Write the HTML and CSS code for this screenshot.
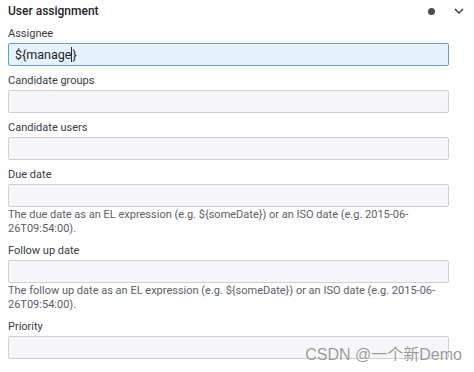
FILE: index.html
```html
<!DOCTYPE html>
<html lang="en">

<head>
    <meta charset="UTF-8">
    <meta name="viewport" content="width=device-width, initial-scale=1.0">
    <title>User assignment</title>
    <link rel="stylesheet" href="styles.css">
</head>

<body>
    <div class="group">
        <div class="group-header">
            <span class="group-title">User assignment</span>
            <span class="group-dot"></span>
            <svg class="group-toggle" width="10" height="6" viewBox="0 0 10 6">
                <path d="M1 1 L5 5 L9 1" fill="none" stroke="#333" stroke-width="1.4" />
            </svg>
        </div>

        <div class="entry">
            <label class="entry-label">Assignee</label>
            <div class="entry-input active">${manage<span class="caret"></span>}</div>
        </div>

        <div class="entry">
            <label class="entry-label">Candidate groups</label>
            <div class="entry-input"></div>
        </div>

        <div class="entry">
            <label class="entry-label">Candidate users</label>
            <div class="entry-input"></div>
        </div>

        <div class="entry">
            <label class="entry-label">Due date</label>
            <div class="entry-input"></div>
            <div class="entry-help">The due date as an EL expression (e.g. ${someDate}) or an ISO date (e.g. 2015-06-26T09:54:00).</div>
        </div>

        <div class="entry">
            <label class="entry-label">Follow up date</label>
            <div class="entry-input"></div>
            <div class="entry-help">The follow up date as an EL expression (e.g. ${someDate}) or an ISO date (e.g. 2015-06-26T09:54:00).</div>
        </div>

        <div class="entry">
            <label class="entry-label">Priority</label>
            <div class="entry-input"></div>
        </div>
    </div>

    <div class="watermark">CSDN @一个新Demo</div>
</body>

</html>
```

FILE: styles.css
```css
body {
    font-family: Roboto, "Noto Sans", Arial, sans-serif;
    background-color: #fff;
    color: #333;
    margin: 0;
    padding: 0;
}

.group {
    padding: 0 25px 0 8px;
}

.group-header {
    display: flex;
    align-items: center;
    height: 22px;
    margin-right: -17px;
    margin-bottom: 3px;
}

.group-title {
    flex: 1;
    font-size: 12px;
    font-weight: 500;
    color: #22242a;
}

.group-dot {
    width: 7px;
    height: 7px;
    border-radius: 50%;
    background-color: #4a4c52;
    margin-right: 19px;
}

.group-toggle {
    margin-right: 2px;
}

.entry {
    margin-bottom: 6px;
}

.entry-label {
    display: block;
    font-size: 11px;
    line-height: 18px;
    color: #3a3c42;
}

.entry-input {
    box-sizing: border-box;
    height: 23px;
    border: 1px solid #cfd0d4;
    border-radius: 2px;
    background-color: #f6f6f8;
    padding: 0 6px;
    font-size: 12.5px;
    line-height: 21px;
    color: #22242a;
}

.entry-input.active {
    border-color: #5a9fd8;
    background-color: #e6f3fe;
}

.caret {
    display: inline-block;
    width: 1px;
    height: 15px;
    background-color: #22242a;
    vertical-align: -3px;
}

.entry-help {
    margin-top: 1px;
    font-size: 11px;
    line-height: 14px;
    color: #5c5e64;
}

.watermark {
    position: absolute;
    right: 12px;
    bottom: 7px;
    font-family: "Liberation Sans", "Noto Sans CJK SC", sans-serif;
    font-size: 16px;
    color: rgba(120, 120, 120, 0.75);
    text-shadow: 0 0 2px #fff;
}
```
